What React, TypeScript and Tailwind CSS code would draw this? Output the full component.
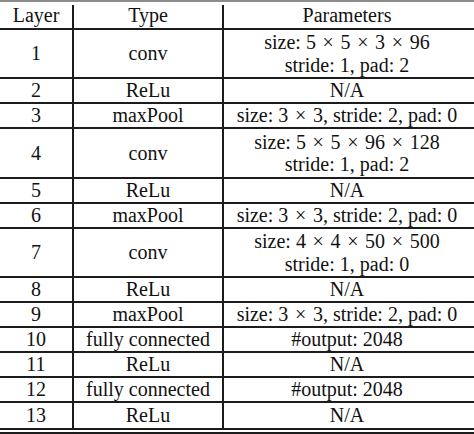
const X = '\u2004×\u2004'

interface Row {
  layer: string
  type: string
  params: string[]
  tall?: boolean
}

const rows: Row[] = [
  { layer: '1', type: 'conv', params: [`size: 5${X}5${X}3${X}96`, 'stride: 1, pad: 2'], tall: true },
  { layer: '2', type: 'ReLu', params: ['N/A'] },
  { layer: '3', type: 'maxPool', params: [`size: 3${X}3, stride: 2, pad: 0`] },
  { layer: '4', type: 'conv', params: [`size: 5${X}5${X}96${X}128`, 'stride: 1, pad: 2'], tall: true },
  { layer: '5', type: 'ReLu', params: ['N/A'] },
  { layer: '6', type: 'maxPool', params: [`size: 3${X}3, stride: 2, pad: 0`] },
  { layer: '7', type: 'conv', params: [`size: 4${X}4${X}50${X}500`, 'stride: 1, pad: 0'], tall: true },
  { layer: '8', type: 'ReLu', params: ['N/A'] },
  { layer: '9', type: 'maxPool', params: [`size: 3${X}3, stride: 2, pad: 0`] },
  { layer: '10', type: 'fully connected', params: ['#output: 2048'] },
  { layer: '11', type: 'ReLu', params: ['N/A'] },
  { layer: '12', type: 'fully connected', params: ['#output: 2048'] },
  { layer: '13', type: 'ReLu', params: ['N/A'] },
]

export default function App() {
  return (
    <div className="w-[474px] h-[434px] bg-white text-[#111] text-[20px] leading-[22.5px] overflow-hidden font-['Liberation_Serif']">
      <div className="h-[2px] bg-[#8c8c8c]" />

      {/* header */}
      <div className="grid grid-cols-[72px_150px_1fr] h-[28px] pt-[3px] border-b-2 border-[#1c1c1c]">
        <div className="flex items-center justify-center -mt-[3px]">Layer</div>
        <div className="flex items-center justify-center border-l-2 border-[#1c1c1c]">
          <span className="-mt-[3px]">Type</span>
        </div>
        <div className="flex items-center justify-center border-l-2 border-[#1c1c1c] pr-1">
          <span className="-mt-[3px]">Parameters</span>
        </div>
      </div>

      {rows.map((row, i) => {
        const last = i === rows.length - 1
        return (
          <div
            key={row.layer}
            className={`grid grid-cols-[72px_150px_1fr] ${row.tall ? (row.layer === '4' ? 'h-[50px]' : 'h-[49px]') : 'h-[25px]'} ${last ? '' : 'border-b-2 border-[#1c1c1c]'}`}
          >
            <div className="flex items-center justify-center">{row.layer}</div>
            <div className="flex items-center justify-center border-l-2 border-[#1c1c1c]">{row.type}</div>
            <div className="flex flex-col items-center justify-center border-l-2 border-[#1c1c1c] pr-1 whitespace-nowrap">
              {row.params.map((p) => (
                <span key={p}>{p}</span>
              ))}
            </div>
          </div>
        )
      })}

      <div className="h-[2px] bg-[#1c1c1c]" />
      <div className="h-[2px] bg-white" />
      <div className="h-[2px] bg-[#1c1c1c]" />
    </div>
  )
}
